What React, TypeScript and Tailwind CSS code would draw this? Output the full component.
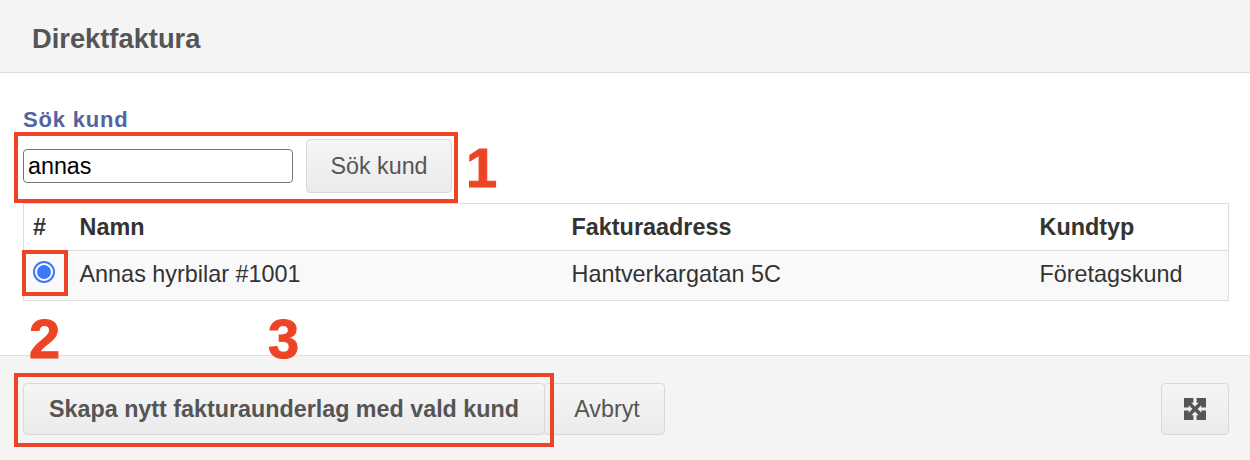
const font = { fontFamily: '"Liberation Sans", Arial, sans-serif' }

const btn =
  'rounded border border-[#d9d9d9] bg-gradient-to-b from-[#f5f5f5] to-[#ebebeb] text-[#555]'

function Annotation({ className }: { className: string }) {
  return <div className={`pointer-events-none absolute border-[4.5px] border-[#ee4426] ${className}`} />
}

function Num({ className, children }: { className: string; children: string }) {
  return (
    <div className={`pointer-events-none absolute text-[56px] leading-none font-bold text-[#ee4426] [-webkit-text-stroke:1px_#ee4426] ${className}`}>
      {children}
    </div>
  )
}

export default function App() {
  return (
    <div
      className="relative flex h-[460px] w-[1250px] flex-col overflow-hidden bg-white text-[#333]"
      style={font}
    >
      <header className="flex h-[73px] items-center border-b border-[#dedede] bg-[#f4f4f4] px-[32px] pt-[7px]">
        <h1 className="text-[27.3px] font-bold text-[#555]">Direktfaktura</h1>
      </header>

      <main className="flex h-[282px] flex-col px-[23px] pt-[35px]">
        <label className="text-[22px] leading-[24px] font-bold tracking-[0.8px] text-[#5264a0]">Sök kund</label>
        <div className="mt-[7px] flex h-[54px] items-center gap-[13px]">
          <input
            readOnly
            value="annas"
            className="h-[34px] w-[270px] rounded border border-[#767676] bg-white px-[4px] text-[23.3px] text-black outline-none"
          />
          <button type="button" className={`h-[54px] w-[146px] text-[23.3px] ${btn}`}>
            Sök kund
          </button>
        </div>
        <table className="mt-[10px] w-[1206px] table-fixed border border-[#dddddd] text-[23.4px]">
          <thead>
            <tr className="h-[47px] text-left">
              <th className="w-[46px] pl-[9px] pt-[2px] font-bold">#</th>
              <th className="w-[492px] pl-[10px] pt-[2px] font-bold">Namn</th>
              <th className="w-[468px] pl-[10px] pt-[2px] font-bold">Fakturaadress</th>
              <th className="pl-[10px] pt-[2px] font-bold">Kundtyp</th>
            </tr>
          </thead>
          <tbody>
            <tr className="h-[50px] border-t border-[#dddddd] bg-[#f9f9f9]">
              <td className="pl-[9px] pb-[8px]">
                <span className="flex size-[22px] items-center justify-center rounded-full border-2 border-[#3b7af7] bg-white">
                  <span className="size-[14px] rounded-full bg-[#3b7af7]" />
                </span>
              </td>
              <td className="pl-[10px] pb-[2px]">Annas hyrbilar #1001</td>
              <td className="pl-[10px] pb-[2px]">Hantverkargatan 5C</td>
              <td className="pl-[10px] pb-[2px]">Företagskund</td>
            </tr>
          </tbody>
        </table>
      </main>

      <footer className="flex flex-1 items-center justify-between border-t border-[#dedede] bg-[#f4f4f4] px-[21px] pt-[2px]">
        <div className="flex items-center">
          <button type="button" className={`ml-[2px] h-[52px] w-[522px] text-[23.3px] font-bold ${btn}`}>
            Skapa nytt fakturaunderlag med vald kund
          </button>
          <button type="button" className={`ml-[-1px] h-[52px] w-[121px] pl-[5px] text-[23.3px] ${btn}`}>
            Avbryt
          </button>
        </div>
        <button type="button" className={`flex h-[52px] w-[68px] items-center justify-center ${btn}`}>
          <svg width="22" height="22" viewBox="0 0 21 21" fill="#555">
            <path
              fillRule="evenodd"
              d="M0 0H21V21H0Z M10.5 8L14 4.5L12 4.5L12 0L9 0L9 4.5L7 4.5Z M10.5 13L7 16.5L9 16.5L9 21L12 21L12 16.5L14 16.5Z M8 10.5L4.5 7L4.5 9L0 9L0 12L4.5 12L4.5 14Z M13 10.5L16.5 14L16.5 12L21 12L21 9L16.5 9L16.5 7Z"
            />
          </svg>
        </button>
      </footer>

      <Annotation className="left-[14px] top-[132px] h-[71px] w-[444px]" />
      <Annotation className="left-[22px] top-[250px] h-[46px] w-[46px]" />
      <Annotation className="left-[14px] top-[373px] h-[74px] w-[540px]" />
      <Num className="left-[466px] top-[140px]">1</Num>
      <Num className="left-[29px] top-[311px]">2</Num>
      <Num className="left-[268px] top-[311px]">3</Num>
    </div>
  )
}
